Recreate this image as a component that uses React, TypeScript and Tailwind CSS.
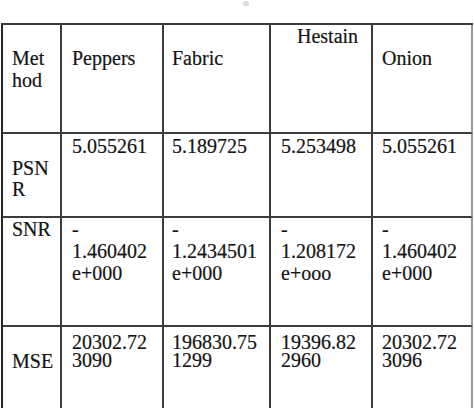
import React from "react";

const B = "border-r-2 border-b-2 border-[#3c3c3c]";
const BL = "border-r-2 border-b-2 border-b-[#3c3c3c] border-r-[#9a9a9a]";

export default function App() {
  return (
    <div
      className="w-[474px] h-[408px] overflow-hidden bg-white text-[#141414] [-webkit-text-stroke:0.2px_#141414]"
      style={{ fontFamily: '"Liberation Serif", "Times New Roman", serif' }}
    >
      <div className="h-[23px] relative">
        <div className="absolute left-[243px] top-[1px] w-[6px] h-[5px] bg-[#dcdcdc] rounded-sm" />
      </div>
      <div className="ml-[1px] w-[472px] border-l-2 border-t-2 border-l-[#262626] border-t-[#3c3c3c] grid grid-cols-[59px_102px_107px_102px_100px] grid-rows-[109px_84px_109px_100px] text-[20px] leading-[22px]">
        {/* Header row */}
        <div className={`${B} pl-[9px] pt-[22px]`}>Met<br />hod</div>
        <div className={`${B} pl-[10px] pt-[22px]`}>Peppers</div>
        <div className={`${B} pl-[8px] pt-[22px]`}>Fabric</div>
        <div className={`${B} pl-[26px] pt-0`}>Hestain</div>
        <div className={`${BL} pl-[9px] pt-[22px]`}>Onion</div>

        {/* PSNR row */}
        <div className={`${B} pl-[9px] pt-[24px] leading-[21px]`}>PSN<br />R</div>
        <div className={`${B} pl-[10px] pt-[1px]`}>5.055261</div>
        <div className={`${B} pl-[8px] pt-[1px]`}>5.189725</div>
        <div className={`${B} pl-[10px] pt-[1px]`}>5.253498</div>
        <div className={`${BL} pl-[9px] pt-[1px]`}>5.055261</div>

        {/* SNR row */}
        <div className={`${B} pl-[9px] pt-0`}>SNR</div>
        <div className={`${B} pl-[10px] pt-0`}>-<br />1.460402<br />e+000</div>
        <div className={`${B} pl-[8px] pt-0`}>-<br />1.2434501<br />e+000</div>
        <div className={`${B} pl-[10px] pt-0`}>-<br />1.208172<br />e+ooo</div>
        <div className={`${BL} pl-[9px] pt-0`}>-<br />1.460402<br />e+000</div>

        {/* MSE row */}
        <div className={`${B} pl-[9px] pt-[23px]`}>MSE</div>
        <div className={`${B} pl-[10px] pt-[6px] leading-[18px]`}>20302.72<br />3090</div>
        <div className={`${B} pl-[8px] pt-[6px] leading-[18px]`}>196830.75<br />1299</div>
        <div className={`${B} pl-[10px] pt-[6px] leading-[18px]`}>19396.82<br />2960</div>
        <div className={`${BL} pl-[9px] pt-[6px] leading-[18px]`}>20302.72<br />3096</div>
      </div>
    </div>
  );
}
